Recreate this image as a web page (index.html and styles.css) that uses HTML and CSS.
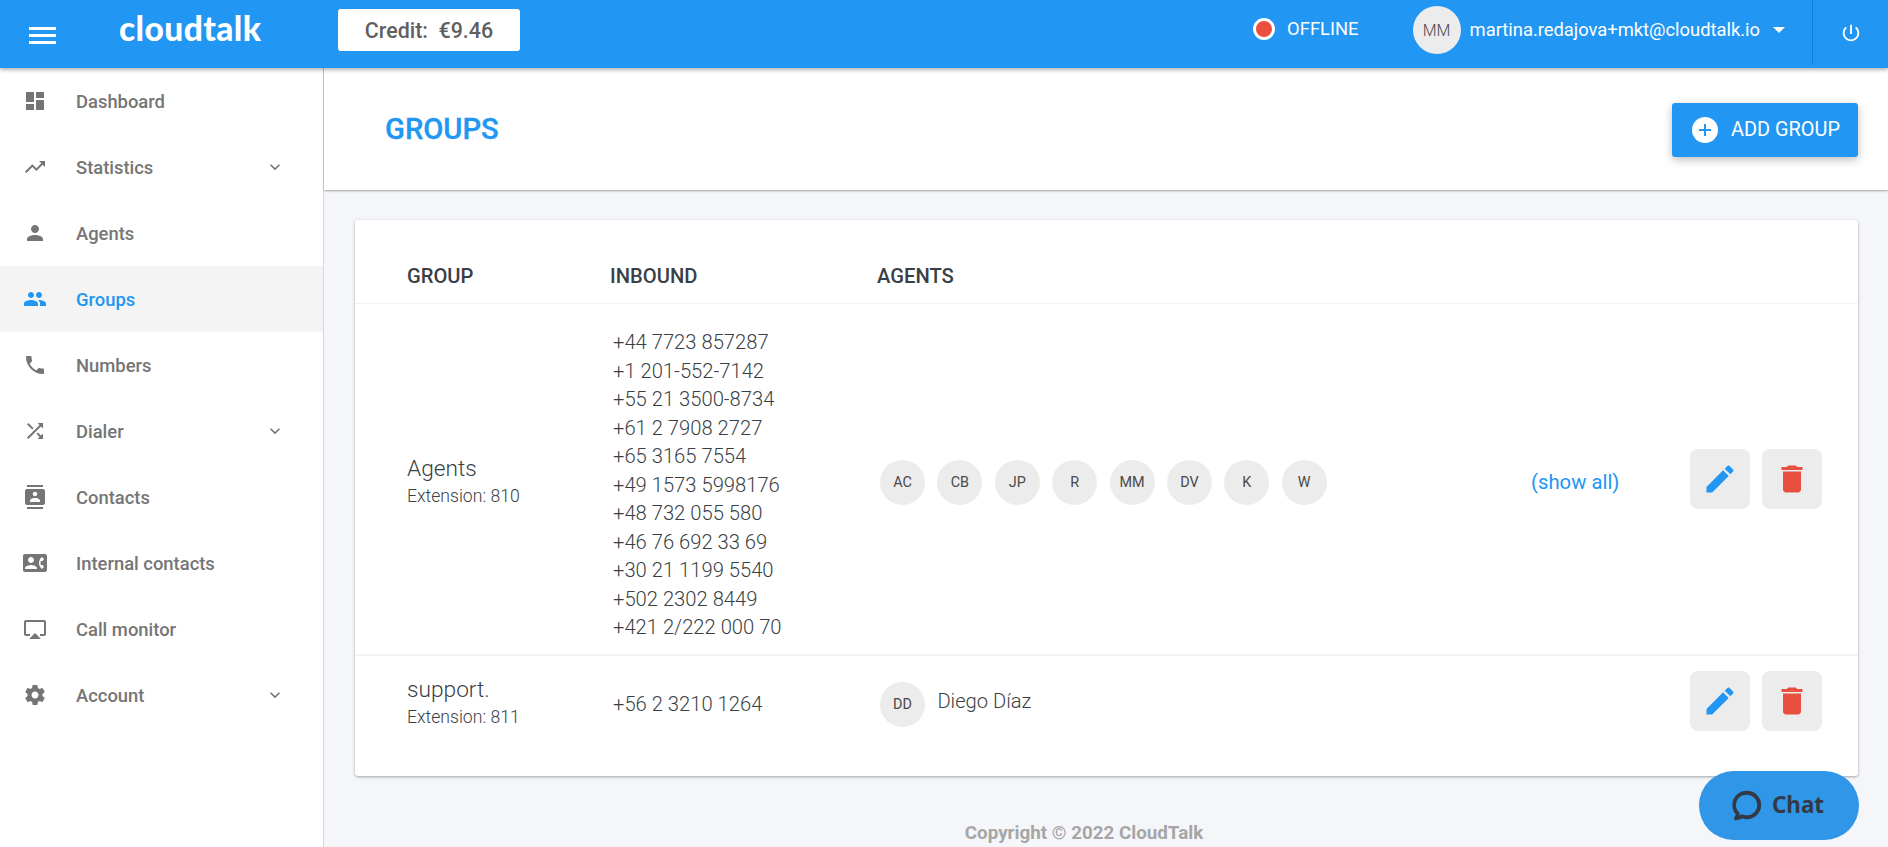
FILE: index.html
```html
<!DOCTYPE html>
<html lang="en">
<head>
<meta charset="utf-8">
<title>CloudTalk - Groups</title>
<link rel="stylesheet" href="styles.css">
</head>
<body>
<svg class="sprite" aria-hidden="true">
  <symbol id="i-dashboard" viewBox="0 0 24 24"><path d="M3 13h8V3H3v10zm0 8h8v-6H3v6zm10 0h8V11h-8v10zm0-18v6h8V3h-8z"/></symbol>
  <symbol id="i-trend" viewBox="0 0 24 24"><path d="M16 6l2.29 2.29-4.88 4.88-4-4L2 16.59 3.41 18l6-6 4 4 6.3-6.29L22 12V6z"/></symbol>
  <symbol id="i-person" viewBox="0 0 24 24"><path d="M12 12c2.21 0 4-1.79 4-4s-1.79-4-4-4-4 1.79-4 4 1.79 4 4 4zm0 2c-2.67 0-8 1.34-8 4v2h16v-2c0-2.66-5.33-4-8-4z"/></symbol>
  <symbol id="i-group" viewBox="0 0 24 24"><path d="M16 11c1.66 0 2.99-1.34 2.99-3S17.66 5 16 5c-1.66 0-3 1.34-3 3s1.34 3 3 3zm-8 0c1.66 0 2.99-1.34 2.99-3S9.66 5 8 5C6.34 5 5 6.34 5 8s1.34 3 3 3zm0 2c-2.33 0-7 1.17-7 3.5V19h14v-2.5c0-2.33-4.67-3.5-7-3.5zm8 0c-.29 0-.62.02-.97.05 1.16.84 1.97 1.97 1.97 3.45V19h6v-2.5c0-2.33-4.67-3.5-7-3.5z"/></symbol>
  <symbol id="i-phone" viewBox="0 0 24 24"><path d="M6.62 10.79c1.44 2.83 3.76 5.14 6.59 6.59l2.2-2.2c.27-.27.67-.36 1.02-.24 1.12.37 2.33.57 3.57.57.55 0 1 .45 1 1V20c0 .55-.45 1-1 1-9.39 0-17-7.61-17-17 0-.55.45-1 1-1h3.5c.55 0 1 .45 1 1 0 1.25.2 2.45.57 3.57.11.35.03.74-.25 1.02l-2.2 2.2z"/></symbol>
  <symbol id="i-shuffle" viewBox="0 0 24 24"><path d="M10.59 9.17L5.41 4 4 5.41l5.17 5.17 1.42-1.41zM14.5 4l2.04 2.04L4 18.59 5.41 20 17.96 7.46 20 9.5V4h-5.5zm.33 9.41l-1.41 1.41 3.13 3.13L14.5 20H20v-5.5l-2.04 2.04-3.13-3.13z"/></symbol>
  <symbol id="i-contacts" viewBox="0 0 24 24"><path d="M20 0H4v2h16V0zM4 24h16v-2H4v2zM20 4H4c-1.1 0-2 .9-2 2v12c0 1.1.9 2 2 2h16c1.1 0 2-.9 2-2V6c0-1.1-.9-2-2-2zm-8 2.75c1.24 0 2.25 1.01 2.25 2.25s-1.01 2.25-2.25 2.25S9.75 10.24 9.75 9 10.76 6.75 12 6.75zM17 17H7v-1.5c0-1.67 3.33-2.5 5-2.5s5 .83 5 2.5V17z"/></symbol>
  <symbol id="i-contact-phone" viewBox="0 0 24 24"><path d="M22 3H2C.9 3 0 3.9 0 5v14c0 1.1.9 2 2 2h20c1.1 0 1.99-.9 1.99-2L24 5c0-1.1-.9-2-2-2zM8 6c1.66 0 3 1.34 3 3s-1.34 3-3 3-3-1.34-3-3 1.34-3 3-3zm6 12H2v-1c0-2 4-3.1 6-3.1s6 1.1 6 3.1v1zm3.85-4h1.64L21 16l-1.99 1.99c-1.31-.98-2.28-2.38-2.73-3.99-.18-.64-.28-1.31-.28-2s.1-1.36.28-2c.45-1.62 1.42-3.01 2.73-3.99L21 8l-1.51 2h-1.64c-.22.63-.35 1.3-.35 2s.13 1.37.35 2z"/></symbol>
  <symbol id="i-airplay" viewBox="0 0 24 24"><path d="M6 22h12l-6-6zM21 3H3c-1.1 0-2 .9-2 2v12c0 1.1.9 2 2 2h4v-2H3V5h18v12h-4v2h4c1.1 0 2-.9 2-2V5c0-1.1-.9-2-2-2z"/></symbol>
  <symbol id="i-settings" viewBox="0 0 24 24"><path d="M19.43 12.98c.04-.32.07-.64.07-.98s-.03-.66-.07-.98l2.11-1.65c.19-.15.24-.42.12-.64l-2-3.46c-.12-.22-.39-.3-.61-.22l-2.49 1c-.52-.4-1.08-.73-1.69-.98l-.38-2.65C14.46 2.18 14.25 2 14 2h-4c-.25 0-.46.18-.49.42l-.38 2.65c-.61.25-1.17.59-1.69.98l-2.49-1c-.23-.09-.49 0-.61.22l-2 3.46c-.13.22-.07.49.12.64l2.11 1.65c-.04.32-.07.65-.07.98s.03.66.07.98l-2.11 1.65c-.19.15-.24.42-.12.64l2 3.46c.12.22.39.3.61.22l2.49-1c.52.4 1.08.73 1.69.98l.38 2.65c.03.24.24.42.49.42h4c.25 0 .46-.18.49-.42l.38-2.65c.61-.25 1.17-.59 1.69-.98l2.49 1c.23.09.49 0 .61-.22l2-3.46c.12-.22.07-.49-.12-.64l-2.11-1.65zM12 15.5c-1.93 0-3.5-1.57-3.5-3.5s1.57-3.5 3.5-3.5 3.5 1.57 3.5 3.5-1.57 3.5-3.5 3.5z"/></symbol>
  <symbol id="i-chevron" viewBox="0 0 24 24"><path d="M7.41 8.59L12 13.17l4.59-4.58L18 10l-6 6-6-6 1.41-1.41z"/></symbol>
  <symbol id="i-edit" viewBox="0 0 24 24"><path d="M3 17.25V21h3.75L17.81 9.94l-3.75-3.75L3 17.25zM20.71 7.04c.39-.39.39-1.02 0-1.41l-2.34-2.34c-.39-.39-1.02-.39-1.41 0l-1.83 1.83 3.75 3.75 1.83-1.83z"/></symbol>
  <symbol id="i-delete" viewBox="0 0 24 24"><path d="M6 19c0 1.1.9 2 2 2h8c1.1 0 2-.9 2-2V7H6v12zM19 4h-3.5l-1-1h-5l-1 1H5v2h14V4z"/></symbol>
  <symbol id="i-power" viewBox="0 0 24 24"><path d="M13 3h-2v10h2V3zm4.83 2.17l-1.42 1.42C17.99 7.86 19 9.81 19 12c0 3.87-3.13 7-7 7s-7-3.13-7-7c0-2.19 1.01-4.14 2.58-5.42L6.17 5.17C4.23 6.82 3 9.26 3 12c0 4.97 4.03 9 9 9s9-4.03 9-9c0-2.74-1.23-5.18-3.17-6.83z"/></symbol>
</svg>

<header class="topbar">
  <button class="burger" aria-label="Menu"><span></span><span></span><span></span></button>
  <div class="logo">cloudtalk</div>
  <div class="credit">Credit:&nbsp; €9.46</div>
  <div class="topbar-right">
    <div class="status"><span class="status-dot"></span>OFFLINE</div>
    <div class="user">
      <span class="avatar avatar-lg">MM</span>
      <span class="user-mail">martina.redajova+mkt@cloudtalk.io</span>
      <span class="caret"></span>
    </div>
    <div class="power"><svg class="icon-power"><use href="#i-power"/></svg></div>
  </div>
</header>

<div class="layout">
  <nav class="sidebar">
    <a class="nav-item"><svg class="nav-icon"><use href="#i-dashboard"/></svg><span class="nav-label">Dashboard</span></a>
    <a class="nav-item"><svg class="nav-icon"><use href="#i-trend"/></svg><span class="nav-label">Statistics</span><svg class="nav-chevron"><use href="#i-chevron"/></svg></a>
    <a class="nav-item"><svg class="nav-icon"><use href="#i-person"/></svg><span class="nav-label">Agents</span></a>
    <a class="nav-item nav-active"><svg class="nav-icon"><use href="#i-group"/></svg><span class="nav-label">Groups</span></a>
    <a class="nav-item"><svg class="nav-icon"><use href="#i-phone"/></svg><span class="nav-label">Numbers</span></a>
    <a class="nav-item"><svg class="nav-icon"><use href="#i-shuffle"/></svg><span class="nav-label">Dialer</span><svg class="nav-chevron"><use href="#i-chevron"/></svg></a>
    <a class="nav-item"><svg class="nav-icon"><use href="#i-contacts"/></svg><span class="nav-label">Contacts</span></a>
    <a class="nav-item"><svg class="nav-icon"><use href="#i-contact-phone"/></svg><span class="nav-label">Internal contacts</span></a>
    <a class="nav-item"><svg class="nav-icon"><use href="#i-airplay"/></svg><span class="nav-label">Call monitor</span></a>
    <a class="nav-item"><svg class="nav-icon"><use href="#i-settings"/></svg><span class="nav-label">Account</span><svg class="nav-chevron"><use href="#i-chevron"/></svg></a>
  </nav>

  <main class="main">
    <div class="page-head">
      <h1 class="page-title">GROUPS</h1>
      <button class="add-btn"><span class="add-plus"></span>ADD GROUP</button>
    </div>

    <section class="card">
      <table class="groups">
        <thead>
          <tr>
            <th class="col-group">GROUP</th>
            <th class="col-inbound">INBOUND</th>
            <th class="col-agents">AGENTS</th>
            <th class="col-more"></th>
            <th class="col-actions"></th>
          </tr>
        </thead>
        <tbody>
          <tr class="row-big">
            <td class="cell-group"><div class="group-name">Agents</div><div class="group-ext">Extension: 810</div></td>
            <td class="cell-inbound">
              <div>+44 7723 857287</div>
              <div>+1 201-552-7142</div>
              <div>+55 21 3500-8734</div>
              <div>+61 2 7908 2727</div>
              <div>+65 3165 7554</div>
              <div>+49 1573 5998176</div>
              <div>+48 732 055 580</div>
              <div>+46 76 692 33 69</div>
              <div>+30 21 1199 5540</div>
              <div>+502 2302 8449</div>
              <div>+421 2/222 000 70</div>
            </td>
            <td class="cell-agents">
              <div class="agents">
                <span class="avatar">AC</span><span class="avatar">CB</span><span class="avatar">JP</span><span class="avatar">R</span><span class="avatar">MM</span><span class="avatar">DV</span><span class="avatar">K</span><span class="avatar">W</span>
              </div>
            </td>
            <td class="cell-more"><a class="show-all">(show all)</a></td>
            <td class="cell-actions">
              <div class="actions">
                <button class="act-btn act-edit" aria-label="Edit"><svg class="act-icon"><use href="#i-edit"/></svg></button>
                <button class="act-btn act-del" aria-label="Delete"><svg class="act-icon"><use href="#i-delete"/></svg></button>
              </div>
            </td>
          </tr>
          <tr class="row-small">
            <td class="cell-group"><div class="group-name">support.</div><div class="group-ext">Extension: 811</div></td>
            <td class="cell-inbound"><div>+56 2 3210 1264</div></td>
            <td class="cell-agents">
              <div class="agents agents-single"><span class="avatar">DD</span><span class="agent-name">Diego Díaz</span></div>
            </td>
            <td class="cell-more"></td>
            <td class="cell-actions">
              <div class="actions">
                <button class="act-btn act-edit" aria-label="Edit"><svg class="act-icon"><use href="#i-edit"/></svg></button>
                <button class="act-btn act-del" aria-label="Delete"><svg class="act-icon"><use href="#i-delete"/></svg></button>
              </div>
            </td>
          </tr>
        </tbody>
      </table>
    </section>

    <footer class="copyright">Copyright © 2022 CloudTalk</footer>
  </main>
</div>

<button class="chat">
  <svg class="chat-icon" viewBox="0 0 30 30"><path d="M15 3.5a11.5 11.5 0 0 1 0 23c-1.7 0-3.3-.4-4.8-1-1.5 1.2-3.4 1.9-5.6 2 1-1.3 1.6-2.7 1.8-4.3A11.5 11.5 0 0 1 15 3.5z" fill="none" stroke="#333a45" stroke-width="3.6" stroke-linejoin="round"/></svg>
  Chat
</button>
</body>
</html>
```

FILE: styles.css
```css
* { box-sizing: border-box; }
html, body { height: 100%; }
body {
  margin: 0;
  height: 847px;
  overflow: hidden;
  display: flex;
  flex-direction: column;
  font-family: Roboto, "Liberation Sans", sans-serif;
  color: #3a3f46;
  background: #f5f6fa;
  position: relative;
}
.sprite { display: none; }
button { font-family: inherit; border: 0; padding: 0; }

/* top bar */
.topbar {
  flex: 0 0 68px;
  height: 68px;
  background: #2196f3;
  display: flex;
  align-items: center;
  color: #fff;
  box-shadow: 0 2px 4px rgba(0,0,0,.3);
  position: relative;
  z-index: 2;
}
.burger {
  width: 27px;
  height: 17px;
  margin-left: 29px;
  margin-top: 2px;
  background: none;
  display: flex;
  flex-direction: column;
  justify-content: space-between;
}
.burger span { display: block; height: 3px; width: 100%; background: #fff; }
.logo {
  margin-left: 63px;
  width: 219px;
  font-family: Lato, sans-serif;
  font-weight: 900;
  font-size: 33.5px;
  letter-spacing: .4px;
  line-height: 33px;
  margin-top: -12px;
}
.credit {
  width: 182px;
  height: 42px;
  margin-top: -9px;
  background: #fff;
  border-radius: 3px;
  color: #5f5f5f;
  font-weight: 500;
  font-size: 21.4px;
  line-height: 43px;
  text-align: center;
}
.topbar-right { margin-left: auto; display: flex; align-items: center; height: 100%; }
.status {
  display: flex;
  align-items: center;
  font-size: 18.4px;
  margin-top: -11px;
  margin-right: 54px;
}
.status-dot {
  width: 22px;
  height: 22px;
  border-radius: 50%;
  background: #ea4f3d;
  border: 3px solid #fff;
  margin-right: 12px;
}
.user { display: flex; align-items: center; margin-top: -8px; }
.user-mail { font-size: 18.35px; margin-left: 9px; margin-top: -2px; }
.caret {
  width: 0;
  height: 0;
  margin-left: 13px;
  margin-right: 27px;
  border-left: 6px solid transparent;
  border-right: 6px solid transparent;
  border-top: 6px solid #fff;
}
.power {
  width: 76px;
  height: 65px;
  align-self: flex-start;
  border-left: 1px solid #1a7fd0;
  display: flex;
  align-items: center;
  justify-content: center;
}
.icon-power { width: 22px; height: 22px; fill: #fff; }

/* avatars */
.avatar {
  flex: none;
  width: 45px;
  height: 45px;
  border-radius: 50%;
  background: #ececec;
  color: #4a4a4a;
  font-size: 14.4px;
  display: flex;
  align-items: center;
  justify-content: center;
}
.avatar-lg { width: 48px; height: 48px; font-size: 16px; font-weight: 300; }

/* layout */
.layout { flex: 1; display: flex; min-height: 0; }
.sidebar {
  flex: 0 0 324px;
  background: #fff;
  border-right: 1px solid #d9d9d9;
}
.nav-item {
  height: 66px;
  display: flex;
  align-items: center;
  padding-left: 23px;
  color: #757575;
}
.nav-icon { width: 24px; height: 24px; fill: #757575; flex: none; }
.nav-label { margin-left: 29px; font-size: 18.4px; font-weight: 500; }
.nav-chevron { width: 20px; height: 20px; fill: #757575; margin-left: auto; margin-right: 38px; }
.nav-active { background: #f4f4f4; color: #2196f3; }
.nav-active .nav-icon { fill: #2196f3; }

.main { flex: 1; min-width: 0; }
.page-head {
  height: 122px;
  background: #fff;
  display: flex;
  align-items: center;
  padding: 0 30px 0 61px;
  box-shadow: 0 1px 2px rgba(0,0,0,.35);
}
.page-title {
  margin: 0;
  color: #2196f3;
  font-size: 29.2px;
  font-weight: 500;
  -webkit-text-stroke: .3px #2196f3;
}
.add-btn {
  margin-left: auto;
  margin-top: 1px;
  width: 186px;
  height: 54px;
  background: #2196f3;
  color: #fff;
  font-size: 19.9px;
  border-radius: 3px;
  display: flex;
  align-items: center;
  justify-content: flex-start;
  padding-left: 20px;
  box-shadow: 0 3px 8px rgba(0,0,0,.25);
}
.add-plus {
  width: 26px;
  height: 26px;
  border-radius: 50%;
  margin-right: 13px;
  background:
    linear-gradient(#2196f3, #2196f3) center / 12px 2px no-repeat,
    linear-gradient(#2196f3, #2196f3) center / 2px 12px no-repeat,
    #fff;
}

/* card & table */
.card {
  margin: 30px 30px 0 31px;
  height: 556px;
  background: #fff;
  border-radius: 3px;
  box-shadow: 0 1px 3px rgba(0,0,0,.35);
}
.groups { width: 100%; border-collapse: collapse; table-layout: fixed; }
.groups th {
  height: 83px;
  padding: 29px 0 0;
  text-align: left;
  font-size: 20.2px;
  font-weight: 500;
  color: #3a3f46;
  border-bottom: 1px solid #f2f2f2;
}
.col-group { width: 255px; }
.col-inbound { width: 267px; }
.col-agents { width: auto; }
.col-more { width: 159px; }
.col-actions { width: 168px; }
.groups th.col-group { padding-left: 52px; }
.groups td { padding: 0; vertical-align: middle; }
.row-big td { height: 352px; border-bottom: 2px solid #f4f4f4; }
.row-small td { height: 90px; }
.groups td.cell-group { padding-left: 52px; }
.groups .row-big td.cell-group { padding-top: 5px; }
.groups .row-small td.cell-group { padding-top: 4px; }
.group-name { font-size: 22.7px; font-weight: 300; color: #3a3f46; line-height: 28px; }
.group-ext { font-size: 17.6px; font-weight: 300; color: #3a3f46; line-height: 24px; margin-top: 1px; }
.groups td.cell-inbound { padding-left: 3px; font-size: 20.2px; font-weight: 300; line-height: 28.5px; color: #3a3f46; }
.groups .row-big td.cell-inbound { padding-top: 12px; }
.groups .row-small td.cell-inbound { padding-top: 7px; }
.agents { display: flex; gap: 12.4px; padding-left: 3px; padding-top: 7px; }
.agents-single { align-items: center; padding-top: 7px; }
.agent-name { font-size: 20.2px; font-weight: 300; margin-top: -6px; }
.show-all { color: #2196f3; font-size: 20.3px; font-weight: 400; position: relative; top: 3px; }
.actions { display: flex; gap: 12px; }
.act-btn {
  width: 60px;
  height: 60px;
  border-radius: 8px;
  background: #ececec;
  display: flex;
  align-items: center;
  justify-content: center;
}
.act-icon { width: 36px; height: 36px; }
.act-edit .act-icon { fill: #2196f3; }
.act-del .act-icon { fill: #e74f3f; }

.copyright {
  margin-top: 47px;
  padding-right: 44px;
  text-align: center;
  font-size: 18.8px;
  font-weight: 700;
  color: #a6a6a6;
  line-height: 20px;
}

/* chat widget */
.chat {
  position: absolute;
  left: 1699px;
  top: 771px;
  width: 160px;
  height: 69px;
  border-radius: 35px;
  background: #2f96e8;
  color: #333a45;
  font-family: "Noto Sans", sans-serif;
  font-size: 22.4px;
  font-weight: 700;
  display: flex;
  align-items: center;
  justify-content: center;
  gap: 9px;
  padding-bottom: 2px;
}
.chat-icon { width: 32px; height: 32px; margin-left: -3px; }
```
